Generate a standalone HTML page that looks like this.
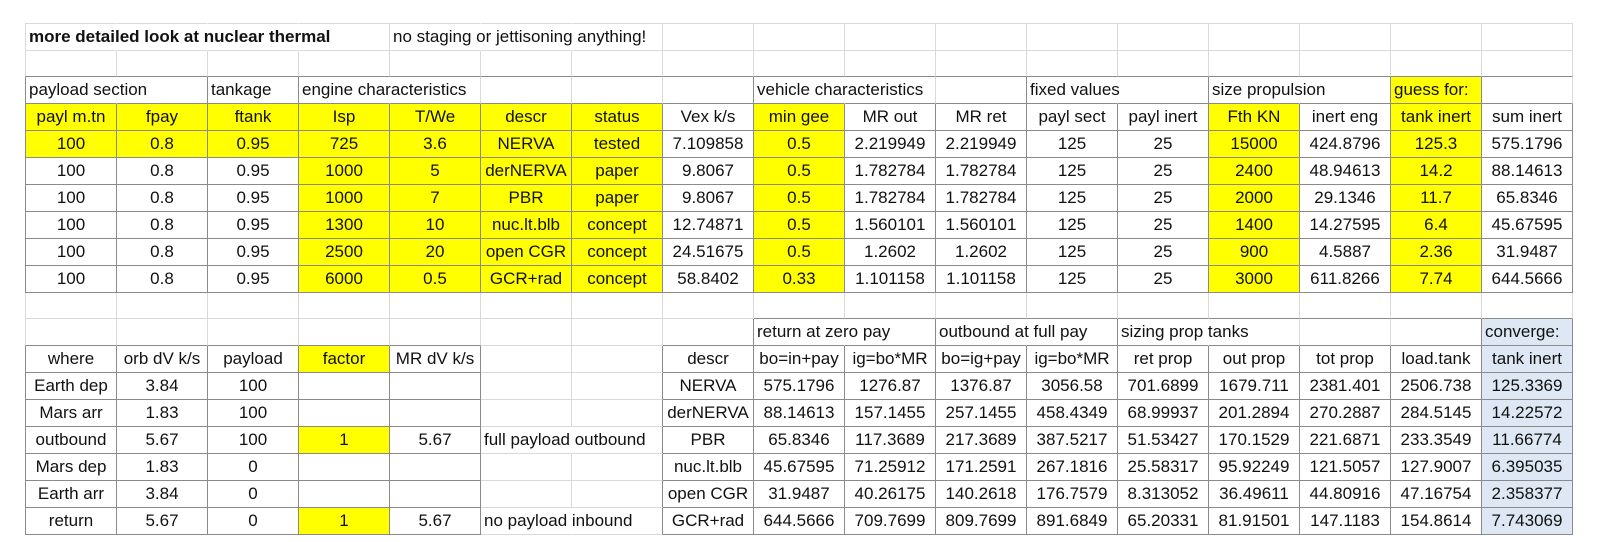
<!DOCTYPE html>
<html><head><meta charset="utf-8">
<style>
html,body{margin:0;padding:0;background:#fff;width:1600px;height:542px;overflow:hidden}
table{position:absolute;left:25px;top:23px;width:1548px;border-collapse:separate;border-spacing:0;table-layout:fixed;font-family:"Liberation Sans",Arial,sans-serif;font-size:17px;color:#111}
td{height:25px;padding:0;border:0;border-right:1px solid #d9d9d9;border-bottom:1px solid #d9d9d9;text-align:center;white-space:nowrap;overflow:visible;line-height:26px;vertical-align:bottom}
tr:first-child td{border-top:1px solid #d9d9d9}
td:first-child{border-left:1px solid #d9d9d9}
td.L{border-left-color:#8a8a8a}
td.R{border-right-color:#8a8a8a}
td.B{border-bottom-color:#8a8a8a}
td.k{border-right-color:#8a8a8a;border-bottom-color:#8a8a8a}
td.n{border-right-color:transparent}
td.l{text-align:left;padding-left:3px}
td.y{background:#ffff00}
td.bl{background:#dde8f4}
b{font-weight:bold}
</style></head><body>
<table>
<colgroup><col style="width:92px"><col style="width:91px"><col style="width:91px"><col style="width:91px"><col style="width:91px"><col style="width:91px"><col style="width:91px"><col style="width:91px"><col style="width:91px"><col style="width:91px"><col style="width:91px"><col style="width:91px"><col style="width:91px"><col style="width:91px"><col style="width:91px"><col style="width:91px"><col style="width:91px"></colgroup>
<tr><td class="l n"><b>more detailed look at nuclear thermal</b></td><td class="n"></td><td class="n"></td><td></td><td class="l n">no staging or jettisoning anything!</td><td class="n"></td><td></td><td></td><td></td><td></td><td></td><td></td><td></td><td></td><td></td><td></td><td></td></tr>
<tr><td class="B"></td><td class="B"></td><td class="B"></td><td class="B"></td><td class="B"></td><td class="B"></td><td class="B"></td><td class="B"></td><td class="B"></td><td class="B"></td><td class="B"></td><td class="B"></td><td class="B"></td><td class="B"></td><td class="B"></td><td class="B"></td><td class="B"></td></tr>
<tr><td class="L l n B">payload section</td><td class="R B"></td><td class="l R B">tankage</td><td class="l n B">engine characteristics</td><td class="B"></td><td class="B"></td><td class="B"></td><td class="R B"></td><td class="l n B">vehicle characteristics</td><td class="B"></td><td class="R B"></td><td class="l n B">fixed values</td><td class="R B"></td><td class="l n B">size propulsion</td><td class="R B"></td><td class="l y R B">guess for:</td><td class="B"></td></tr>
<tr><td class="L k y">payl m.tn</td><td class="k y">fpay</td><td class="k y">ftank</td><td class="k y">Isp</td><td class="k y">T/We</td><td class="k y">descr</td><td class="k y">status</td><td class="k">Vex k/s</td><td class="k y">min gee</td><td class="k">MR out</td><td class="k">MR ret</td><td class="k">payl sect</td><td class="k">payl inert</td><td class="k y">Fth KN</td><td class="k">inert eng</td><td class="k y">tank inert</td><td class="k">sum inert</td></tr>
<tr><td class="L k y">100</td><td class="k y">0.8</td><td class="k y">0.95</td><td class="k y">725</td><td class="k y">3.6</td><td class="k y">NERVA</td><td class="k y">tested</td><td class="k">7.109858</td><td class="k y">0.5</td><td class="k">2.219949</td><td class="k">2.219949</td><td class="k">125</td><td class="k">25</td><td class="k y">15000</td><td class="k">424.8796</td><td class="k y">125.3</td><td class="k">575.1796</td></tr>
<tr><td class="L k">100</td><td class="k">0.8</td><td class="k">0.95</td><td class="k y">1000</td><td class="k y">5</td><td class="k y">derNERVA</td><td class="k y">paper</td><td class="k">9.8067</td><td class="k y">0.5</td><td class="k">1.782784</td><td class="k">1.782784</td><td class="k">125</td><td class="k">25</td><td class="k y">2400</td><td class="k">48.94613</td><td class="k y">14.2</td><td class="k">88.14613</td></tr>
<tr><td class="L k">100</td><td class="k">0.8</td><td class="k">0.95</td><td class="k y">1000</td><td class="k y">7</td><td class="k y">PBR</td><td class="k y">paper</td><td class="k">9.8067</td><td class="k y">0.5</td><td class="k">1.782784</td><td class="k">1.782784</td><td class="k">125</td><td class="k">25</td><td class="k y">2000</td><td class="k">29.1346</td><td class="k y">11.7</td><td class="k">65.8346</td></tr>
<tr><td class="L k">100</td><td class="k">0.8</td><td class="k">0.95</td><td class="k y">1300</td><td class="k y">10</td><td class="k y">nuc.lt.blb</td><td class="k y">concept</td><td class="k">12.74871</td><td class="k y">0.5</td><td class="k">1.560101</td><td class="k">1.560101</td><td class="k">125</td><td class="k">25</td><td class="k y">1400</td><td class="k">14.27595</td><td class="k y">6.4</td><td class="k">45.67595</td></tr>
<tr><td class="L k">100</td><td class="k">0.8</td><td class="k">0.95</td><td class="k y">2500</td><td class="k y">20</td><td class="k y">open CGR</td><td class="k y">concept</td><td class="k">24.51675</td><td class="k y">0.5</td><td class="k">1.2602</td><td class="k">1.2602</td><td class="k">125</td><td class="k">25</td><td class="k y">900</td><td class="k">4.5887</td><td class="k y">2.36</td><td class="k">31.9487</td></tr>
<tr><td class="L k">100</td><td class="k">0.8</td><td class="k">0.95</td><td class="k y">6000</td><td class="k y">0.5</td><td class="k y">GCR+rad</td><td class="k y">concept</td><td class="k">58.8402</td><td class="k y">0.33</td><td class="k">1.101158</td><td class="k">1.101158</td><td class="k">125</td><td class="k">25</td><td class="k y">3000</td><td class="k">611.8266</td><td class="k y">7.74</td><td class="k">644.5666</td></tr>
<tr><td></td><td></td><td></td><td></td><td></td><td></td><td></td><td></td><td class="B"></td><td class="B"></td><td class="B"></td><td class="B"></td><td class="B"></td><td class="B"></td><td class="B"></td><td class="B"></td><td class="B"></td></tr>
<tr><td class="B"></td><td class="B"></td><td class="B"></td><td class="B"></td><td class="B"></td><td></td><td></td><td class="k"></td><td class="l n B">return at zero pay</td><td class="k"></td><td class="l n B">outbound at full pay</td><td class="k"></td><td class="l n B">sizing prop tanks</td><td class="B"></td><td class="B"></td><td class="k"></td><td class="l k bl">converge:</td></tr>
<tr><td class="L k">where</td><td class="k">orb dV k/s</td><td class="k">payload</td><td class="k y">factor</td><td class="k">MR dV k/s</td><td></td><td class="R"></td><td class="k">descr</td><td class="k">bo=in+pay</td><td class="k">ig=bo*MR</td><td class="k">bo=ig+pay</td><td class="k">ig=bo*MR</td><td class="k">ret prop</td><td class="k">out prop</td><td class="k">tot prop</td><td class="k">load.tank</td><td class="k bl">tank inert</td></tr>
<tr><td class="L k">Earth dep</td><td class="k">3.84</td><td class="k">100</td><td class="k"></td><td class="k"></td><td></td><td class="R"></td><td class="k">NERVA</td><td class="k">575.1796</td><td class="k">1276.87</td><td class="k">1376.87</td><td class="k">3056.58</td><td class="k">701.6899</td><td class="k">1679.711</td><td class="k">2381.401</td><td class="k">2506.738</td><td class="k bl">125.3369</td></tr>
<tr><td class="L k">Mars arr</td><td class="k">1.83</td><td class="k">100</td><td class="k"></td><td class="k"></td><td></td><td class="R"></td><td class="k">derNERVA</td><td class="k">88.14613</td><td class="k">157.1455</td><td class="k">257.1455</td><td class="k">458.4349</td><td class="k">68.99937</td><td class="k">201.2894</td><td class="k">270.2887</td><td class="k">284.5145</td><td class="k bl">14.22572</td></tr>
<tr><td class="L k">outbound</td><td class="k">5.67</td><td class="k">100</td><td class="k y">1</td><td class="k">5.67</td><td class="l n">full payload outbound</td><td class="R"></td><td class="k">PBR</td><td class="k">65.8346</td><td class="k">117.3689</td><td class="k">217.3689</td><td class="k">387.5217</td><td class="k">51.53427</td><td class="k">170.1529</td><td class="k">221.6871</td><td class="k">233.3549</td><td class="k bl">11.66774</td></tr>
<tr><td class="L k">Mars dep</td><td class="k">1.83</td><td class="k">0</td><td class="k"></td><td class="k"></td><td></td><td class="R"></td><td class="k">nuc.lt.blb</td><td class="k">45.67595</td><td class="k">71.25912</td><td class="k">171.2591</td><td class="k">267.1816</td><td class="k">25.58317</td><td class="k">95.92249</td><td class="k">121.5057</td><td class="k">127.9007</td><td class="k bl">6.395035</td></tr>
<tr><td class="L k">Earth arr</td><td class="k">3.84</td><td class="k">0</td><td class="k"></td><td class="k"></td><td></td><td class="R"></td><td class="k">open CGR</td><td class="k">31.9487</td><td class="k">40.26175</td><td class="k">140.2618</td><td class="k">176.7579</td><td class="k">8.313052</td><td class="k">36.49611</td><td class="k">44.80916</td><td class="k">47.16754</td><td class="k bl">2.358377</td></tr>
<tr><td class="L k">return</td><td class="k">5.67</td><td class="k">0</td><td class="k y">1</td><td class="k">5.67</td><td class="l n">no payload inbound</td><td class="R"></td><td class="k">GCR+rad</td><td class="k">644.5666</td><td class="k">709.7699</td><td class="k">809.7699</td><td class="k">891.6849</td><td class="k">65.20331</td><td class="k">81.91501</td><td class="k">147.1183</td><td class="k">154.8614</td><td class="k bl">7.743069</td></tr>
</table>
</body></html>
